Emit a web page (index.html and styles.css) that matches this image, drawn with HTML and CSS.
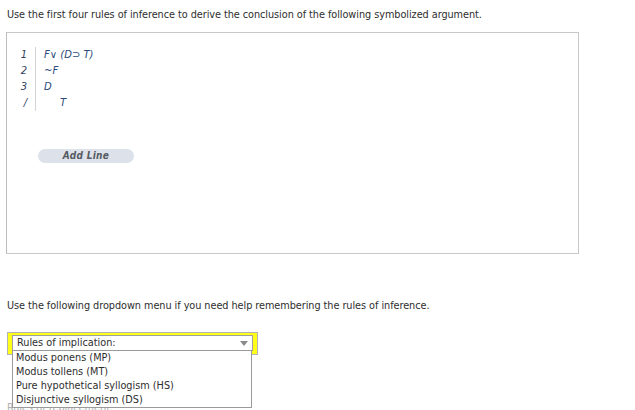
FILE: index.html
```html
<!DOCTYPE html>
<html>
<head>
<meta charset="utf-8">
<link rel="stylesheet" href="styles.css">
</head>
<body>
<p class="prompt">Use the first four rules of inference to derive the conclusion of the following symbolized argument.</p>
<div class="workspace">
  <div class="proof">
    <div class="num">1</div><div class="line">F∨ (D⊃ T)</div>
    <div class="num">2</div><div class="line">~F</div>
    <div class="num">3</div><div class="line">D</div>
    <div class="num">/</div><div class="line concl">T</div>
  </div>
  <div class="add-line">Add Line</div>
</div>
<p class="prompt second">Use the following dropdown menu if you need help remembering the rules of inference.</p>
<div class="dropdown">
  <div class="highlight">
    <div class="select">
      <span>Rules of implication:</span>
      <span class="arrow"></span>
    </div>
  </div>
  <ul class="options">
    <li>Modus ponens (MP)</li>
    <li>Modus tollens (MT)</li>
    <li>Pure hypothetical syllogism (HS)</li>
    <li>Disjunctive syllogism (DS)</li>
  </ul>
  <p class="hidden-text">Rules of replacement:</p>
</div>
</body>
</html>
```
FILE: styles.css
```css
html, body {
  margin: 0;
  padding: 0;
  background: #ffffff;
}
body {
  padding: 9px 7px 0 7px;
  font-family: "DejaVu Sans Condensed", "DejaVu Sans", sans-serif;
  font-size: 10.8px;
  color: #2e2e2e;
}
.prompt {
  margin: 0;
  line-height: 12px;
  letter-spacing: -0.05px;
}
.workspace {
  margin: 11px 0 0 -1px;
  width: 571px;
  height: 220px;
  border: 1px solid #c8c8c8;
  border-left-color: #bdbdbd;
  box-sizing: content-box;
  padding: 0;
}
.proof {
  display: grid;
  grid-template-columns: 28px auto;
  margin-top: 14px;
  font-family: "DejaVu Sans", sans-serif;
  font-style: italic;
  font-size: 10px;
  color: #2a4a7c;
}
.num {
  height: 16px;
  line-height: 16px;
  text-align: right;
  padding-right: 8px;
  color: #33415c;
}
.line {
  height: 16px;
  line-height: 16px;
  border-left: 1px solid #d4d4d4;
  padding-left: 8px;
}
.concl {
  padding-left: 24px;
}
.add-line {
  margin: 38px 0 0 31px;
  width: 96px;
  height: 14px;
  line-height: 14px;
  border-radius: 7px;
  background: #dde2ea;
  color: #555a62;
  font-style: italic;
  font-weight: bold;
  font-size: 10px;
  letter-spacing: 0.3px;
  text-align: center;
}
.second {
  margin-top: 46px;
}
.dropdown {
  position: relative;
  margin-top: 20px;
  width: 251px;
}
.highlight {
  border: 1px solid #b4b4b4;
  background: #ffff1a;
  padding: 2px 4px 3px 4px;
}
.select {
  display: flex;
  justify-content: space-between;
  align-items: center;
  height: 14px;
  border: 1px solid #a0a0a0;
  background: #ffffff;
  padding: 0 4px;
  line-height: 14px;
}
.arrow {
  width: 0;
  height: 0;
  border-left: 4px solid transparent;
  border-right: 4px solid transparent;
  border-top: 5px solid #8a8a8a;
}
.options {
  position: absolute;
  left: 5px;
  top: 18px;
  width: 238px;
  margin: 0;
  padding: 0;
  list-style: none;
  border: 1px solid #9a9a9a;
  background: #ffffff;
  z-index: 2;
}
.options li {
  height: 14px;
  line-height: 14px;
  padding-left: 3px;
}
.hidden-text {
  margin: 47px 0 0 0;
  color: #b0b0b0;
  line-height: 12px;
}
```
